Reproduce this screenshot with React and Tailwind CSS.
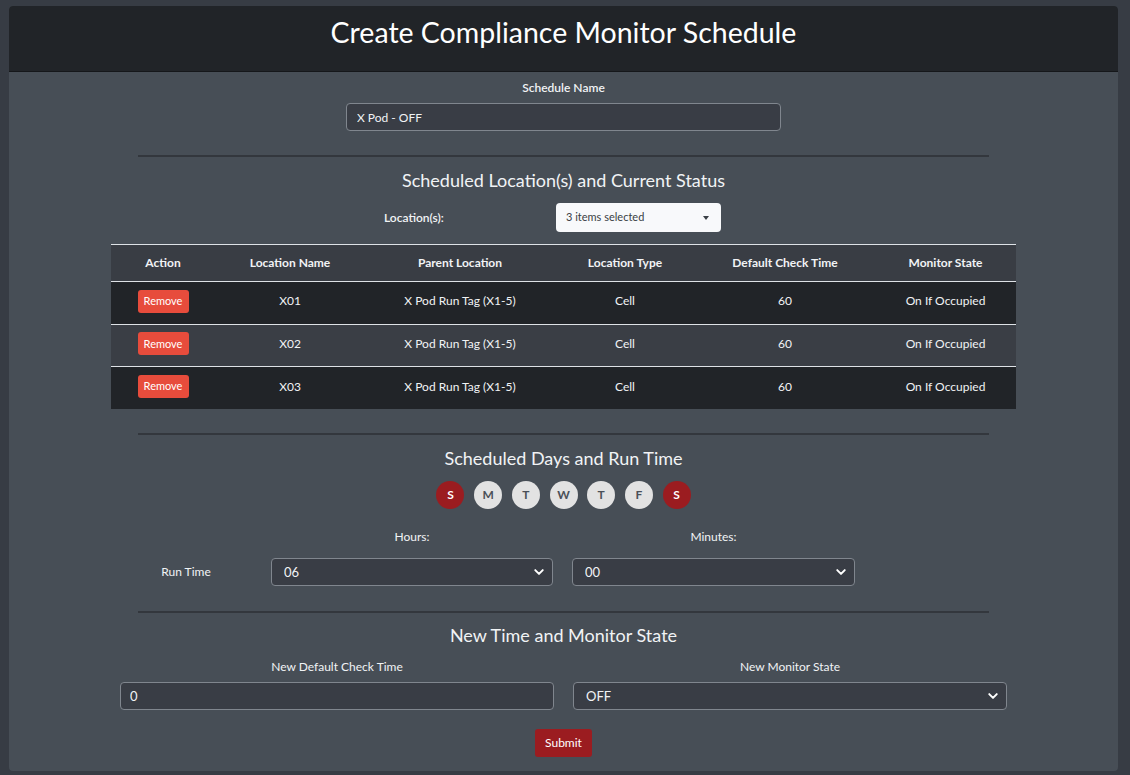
import { useState } from "react";

const rows = [
  { name: "X01", parent: "X Pod Run Tag (X1-5)", type: "Cell", check: "60", state: "On If Occupied" },
  { name: "X02", parent: "X Pod Run Tag (X1-5)", type: "Cell", check: "60", state: "On If Occupied" },
  { name: "X03", parent: "X Pod Run Tag (X1-5)", type: "Cell", check: "60", state: "On If Occupied" },
];

const days = [
  { key: "sun", label: "S", on: true },
  { key: "mon", label: "M", on: false },
  { key: "tue", label: "T", on: false },
  { key: "wed", label: "W", on: false },
  { key: "thu", label: "T", on: false },
  { key: "fri", label: "F", on: false },
  { key: "sat", label: "S", on: true },
];

const Chevron = () => (
  <svg
    className="pointer-events-none absolute right-[8px] top-1/2 -translate-y-1/2"
    width="12"
    height="12"
    viewBox="0 0 16 16"
    fill="none"
    stroke="#ffffff"
    strokeWidth="2.6"
    strokeLinecap="round"
    strokeLinejoin="round"
  >
    <path d="M3 5.5l5 5 5-5" />
  </svg>
);

const Select = ({ value, options, className = "" }) => (
  <div className={`relative ${className}`}>
    <select
      defaultValue={value}
      className="h-[28px] w-full appearance-none rounded-[4px] border border-[#80868e] bg-[#393d45] pl-[12px] pr-[30px] text-[13px] text-[#f1f3f5] outline-none"
    >
      {options.map((o) => (
        <option key={o}>{o}</option>
      ))}
    </select>
    <Chevron />
  </div>
);

const Divider = () => <hr className="mx-auto w-[851px] border-t-2 border-[#33373d]" />;

const App = () => {
  const [selected, setSelected] = useState(days);

  const toggleDay = (key) =>
    setSelected((prev) => prev.map((d) => (d.key === key ? { ...d, on: !d.on } : d)));

  return (
    <div
      className="min-h-[775px] bg-[#373c44] px-[9px] pt-[6px] pb-[4px] text-[#f1f3f5]"
      style={{ fontFamily: "Lato, 'Noto Sans', sans-serif" }}
    >
      <div className="w-[1109px] overflow-hidden rounded-[4px] bg-[#474e56]">
        {/* header */}
        <div className="flex h-[66px] items-center justify-center border-b border-[#15171a] bg-[#212428] pb-[12px]">
          <h1 className="text-[28.5px] leading-none text-white">Create Compliance Monitor Schedule</h1>
        </div>

        {/* nome */}
        <div className="flex flex-col items-center pt-[7px]">
          <label className="text-[12px] font-semibold leading-[18px]">Schedule Name</label>
          <input
            defaultValue="X Pod - OFF"
            className="mt-[6px] h-[28px] w-[435px] rounded-[4px] border border-[#80868e] bg-[#393d45] px-[10px] text-[12px] text-[#f1f3f5] outline-none"
          />
        </div>

        <div className="mt-[24px]">
          <Divider />
        </div>

        {/* locais */}
        <h2 className="mt-[11px] text-center text-[18px] leading-[24px]">Scheduled Location(s) and Current Status</h2>
        <div className="mt-[11px] flex items-center justify-center pr-[22px]">
          <span className="w-[172px] text-[12px] font-semibold">Location(s):</span>
          <button
            type="button"
            className="flex h-[29px] w-[165px] items-center justify-between rounded-[4px] bg-[#f8f9fb] pl-[10px] pr-[12px] text-[11px] text-[#3a3f45]"
          >
            <span>3 items selected</span>
            <span className="h-0 w-0 border-x-[3px] border-t-[4px] border-x-transparent border-t-[#3a3f45]" />
          </button>
        </div>

        <table className="mx-auto mt-[12px] w-[905px] table-fixed border-collapse text-center text-[12px]">
          <colgroup>
            <col className="w-[104px]" />
            <col className="w-[150px]" />
            <col className="w-[190px]" />
            <col className="w-[140px]" />
            <col className="w-[180px]" />
            <col className="w-[141px]" />
          </colgroup>
          <thead>
            <tr className="h-[37px] border-y border-[#dee2e6] bg-[#393d44] font-bold">
              <th>Action</th>
              <th>Location Name</th>
              <th>Parent Location</th>
              <th>Location Type</th>
              <th>Default Check Time</th>
              <th>Monitor State</th>
            </tr>
          </thead>
          <tbody>
            {rows.map((r, i) => (
              <tr
                key={r.name}
                className={`h-[42.6px] ${i % 2 === 0 ? "bg-[#212428]" : "bg-[#3a3e45]"} ${
                  i < rows.length - 1 ? "border-b border-[#dee2e6]" : ""
                }`}
              >
                <td className="pb-[3px] align-middle">
                  <button
                    type="button"
                    className="h-[23px] w-[51px] rounded-[3px] bg-[#e74c3c] text-[11px] text-white"
                  >
                    Remove
                  </button>
                </td>
                <td className="pb-[3px]">{r.name}</td>
                <td className="pb-[3px]">{r.parent}</td>
                <td className="pb-[3px]">{r.type}</td>
                <td className="pb-[3px]">{r.check}</td>
                <td className="pb-[3px]">{r.state}</td>
              </tr>
            ))}
          </tbody>
        </table>

        <div className="mt-[24px]">
          <Divider />
        </div>

        {/* dias */}
        <h2 className="mt-[11px] text-center text-[18px] leading-[24px]">Scheduled Days and Run Time</h2>
        <div className="mt-[11px] flex justify-center gap-[9.7px]">
          {selected.map((d) => (
            <button
              key={d.key}
              type="button"
              onClick={() => toggleDay(d.key)}
              className={`flex h-[28px] w-[28px] items-center justify-center rounded-full text-[12px] font-bold ${
                d.on ? "bg-[#9b1c20] text-white" : "bg-[#e2e2e2] text-[#4a5058]"
              }`}
            >
              {d.label}
            </button>
          ))}
        </div>

        <div className="mx-auto mt-[19px] grid w-[905px] grid-cols-[141px_282px_283px] gap-x-[19px]">
          <div />
          <label className="text-center text-[12px] leading-[18px]">Hours:</label>
          <label className="text-center text-[12px] leading-[18px]">Minutes:</label>
          <div className="mt-[12px] flex h-[28px] items-center justify-center pl-[9px] text-[12px]">Run Time</div>
          <Select className="mt-[12px]" value="06" options={["06"]} />
          <Select className="mt-[12px]" value="00" options={["00"]} />
        </div>

        <div className="mt-[25px]">
          <Divider />
        </div>

        {/* novo estado */}
        <h2 className="mt-[10px] text-center text-[18px] leading-[24px]">New Time and Monitor State</h2>
        <div className="mx-auto mt-[11px] grid w-[905px] grid-cols-2 gap-x-[19px] px-[9px]">
          <label className="text-center text-[12px] leading-[18px]">New Default Check Time</label>
          <label className="text-center text-[12px] leading-[18px]">New Monitor State</label>
          <input
            defaultValue="0"
            className="mt-[6px] h-[28px] w-full rounded-[4px] border border-[#80868e] bg-[#393d45] px-[9px] text-[13px] text-[#f1f3f5] outline-none"
          />
          <Select className="mt-[6px]" value="OFF" options={["OFF", "ON", "On If Occupied"]} />
        </div>

        <div className="mt-[19px] flex justify-center pb-[14px]">
          <button type="button" className="h-[28px] w-[57px] rounded-[3px] bg-[#9b1c20] text-[12px] text-white">
            Submit
          </button>
        </div>
      </div>
    </div>
  );
};

export default App;
